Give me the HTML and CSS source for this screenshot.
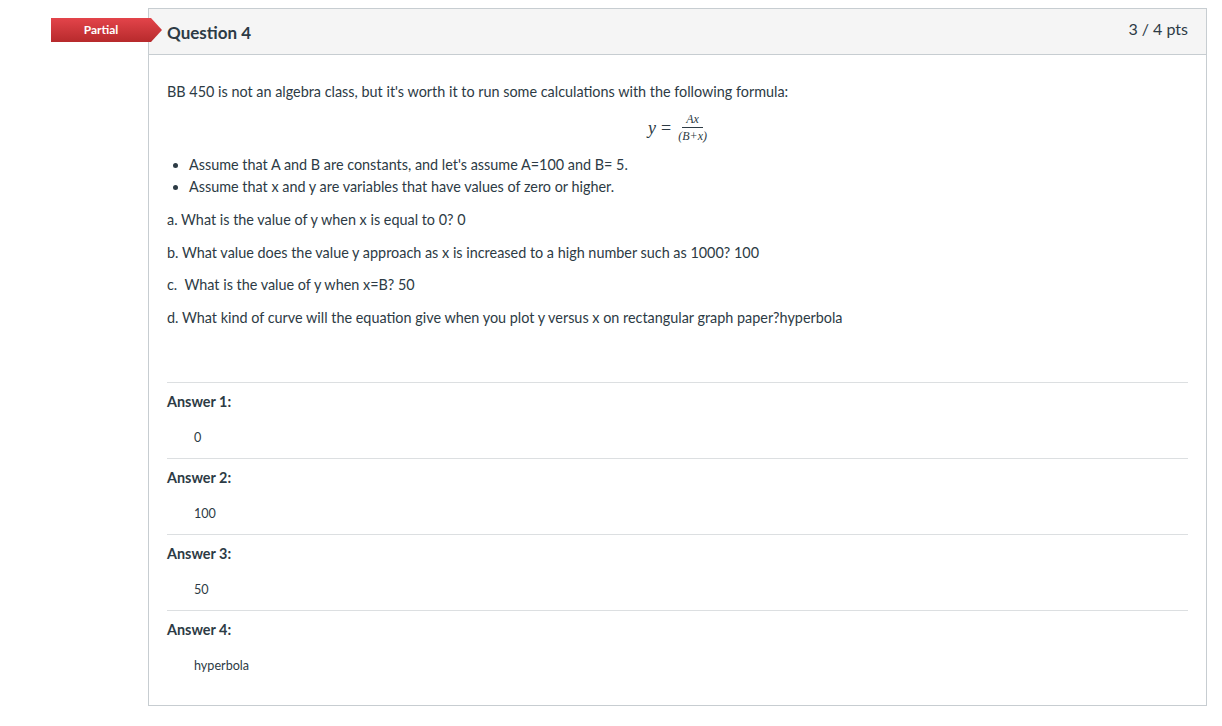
FILE: index.html
```html
<!DOCTYPE html>
<html lang="en">
<head>
  <meta charset="UTF-8" />
  <title>Question 4</title>
  <link rel="stylesheet" href="styles.css">
</head>
<body>

<div class="quiz">
  <div class="question">
    <div class="badge">Partial</div>
    <div class="question-header">
      <span class="question-name">Question 4</span>
      <span class="question-pts">3 / 4 pts</span>
    </div>

    <div class="question-content">
      <div class="question-text">
        <p>BB 450 is not an algebra class, but it's worth it to run some calculations with the following formula:</p>
        <div class="formula">
          <span class="math-y">y</span>
          <span class="math-eq">=</span>
          <span class="frac">
            <span class="num">Ax</span>
            <span class="den">(B+x)</span>
          </span>
        </div>
        <ul>
          <li>Assume that A and B are constants, and let's assume A=100 and B= 5.</li>
          <li>Assume that x and y are variables that have values of zero or higher.</li>
        </ul>
        <p>a. What is the value of y when x is equal to 0? 0</p>
        <p>b. What value does the value y approach as x is increased to a high number such as 1000? 100</p>
        <p>c.&nbsp; What is the value of y when x=B? 50</p>
        <p>d. What kind of curve will the equation give when you plot y versus x on rectangular graph paper?hyperbola</p>
      </div>

      <div class="answer">
        <div class="answer-label">Answer 1:</div>
        <div class="answer-value">0</div>
      </div>
      <div class="answer">
        <div class="answer-label">Answer 2:</div>
        <div class="answer-value">100</div>
      </div>
      <div class="answer">
        <div class="answer-label">Answer 3:</div>
        <div class="answer-value">50</div>
      </div>
      <div class="answer last">
        <div class="answer-label">Answer 4:</div>
        <div class="answer-value">hyperbola</div>
      </div>
    </div>
  </div>
</div>

</body>
</html>
```

FILE: styles.css
```css
body {
  margin: 0;
  padding: 0;
  font-family: Lato, "Open Sans", sans-serif;
  color: #2d3b45;
  background: #fff;
}
.quiz {
  padding: 8px 15px 20px 148px;
}
.question {
  position: relative;
  border: 1px solid #c7cdd1;
}
.badge {
  position: absolute;
  left: -98px;
  top: 9px;
  width: 111px;
  height: 24px;
  padding-right: 11px;
  box-sizing: border-box;
  background: linear-gradient(to bottom, #e3444a, #b72a2c);
  clip-path: polygon(0 0, 100px 0, 111px 50%, 100px 100%, 0 100%);
  color: #fff;
  font-size: 12px;
  font-weight: bold;
  line-height: 24px;
  text-align: center;
}
.question-header {
  display: flex;
  justify-content: space-between;
  height: 45px;
  padding: 0 18px;
  background: #f5f5f5;
  border-bottom: 1px solid #c7cdd1;
}
.question-name {
  font-size: 17px;
  font-weight: bold;
  padding-top: 13px;
}
.question-pts {
  font-size: 16px;
  padding-top: 10px;
}
.question-content {
  padding: 14px 18px 0 18px;
}
.question-text {
  font-size: 14.4px;
  line-height: 21px;
  padding-bottom: 42px;
  border-bottom: 1px solid #dcdfe1;
}
.question-text p {
  margin: 11.7px 0;
}
.formula {
  display: flex;
  justify-content: center;
  align-items: center;
  margin: 8px 0 11px;
  font-family: "Liberation Serif", "DejaVu Serif", serif;
}
.math-y {
  font-style: italic;
  font-size: 18px;
}
.math-eq {
  font-size: 18px;
  margin: 0 7px 0 5px;
}
.frac {
  display: inline-flex;
  flex-direction: column;
  align-items: center;
  font-size: 12px;
  font-style: italic;
  line-height: 13px;
}
.frac .num {
  padding: 0 4px 1px;
  border-bottom: 1px solid #2d3b45;
}
.frac .den {
  padding-top: 2px;
}
ul {
  margin: 6px 0 -1px;
  padding-left: 22px;
}
li {
  line-height: 22px;
}
.answer {
  padding: 9.5px 0 10px;
  border-bottom: 1px solid #dcdfe1;
}
.answer.last {
  border-bottom: none;
  padding-bottom: 29px;
}
.answer-label {
  font-size: 14.4px;
  font-weight: bold;
  line-height: 20px;
}
.answer-value {
  margin-top: 15.5px;
  padding-left: 27px;
  font-size: 12.6px;
  line-height: 20px;
}
```
